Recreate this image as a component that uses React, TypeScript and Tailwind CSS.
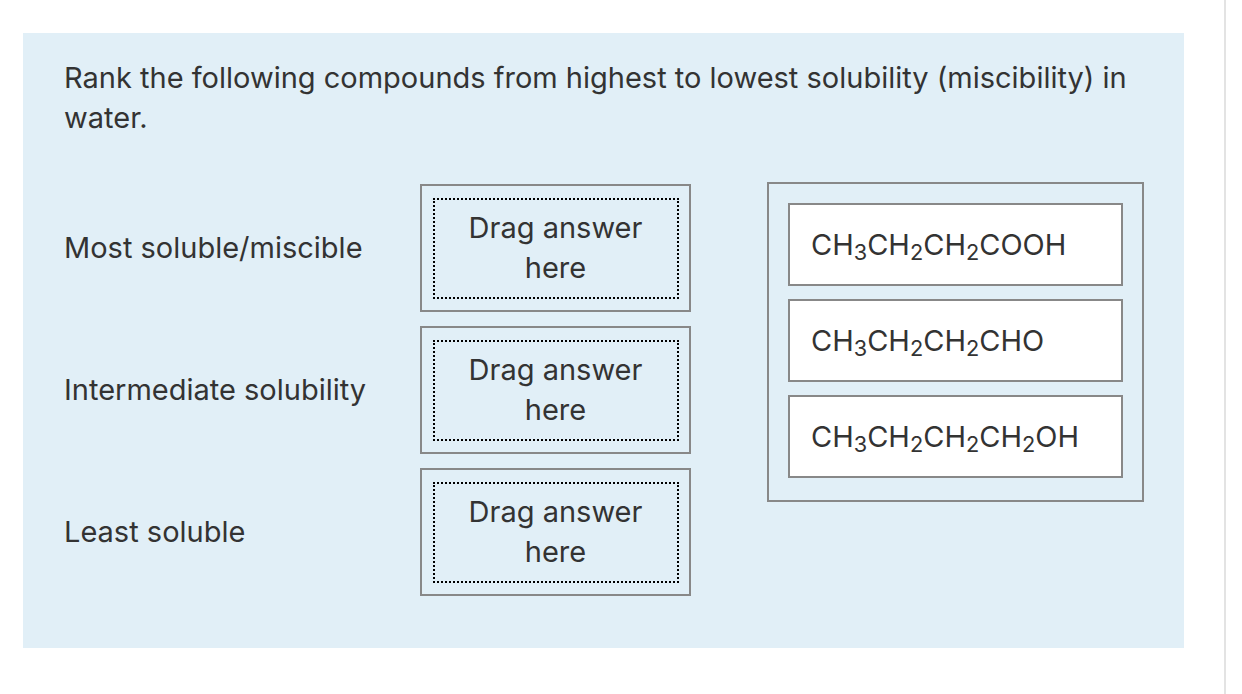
import React from "react";

const rows = ["Most soluble/miscible", "Intermediate solubility", "Least soluble"];

const Formula: React.FC<{ parts: [string, string?][] }> = ({ parts }) => (
  <span>
    {parts.map(([t, s], i) => (
      <React.Fragment key={i}>
        {t}
        {s && <sub>{s}</sub>}
      </React.Fragment>
    ))}
  </span>
);

const answers: [string, string?][][] = [
  [["CH", "3"], ["CH", "2"], ["CH", "2"], ["COOH"]],
  [["CH", "3"], ["CH", "2"], ["CH", "2"], ["CHO"]],
  [["CH", "3"], ["CH", "2"], ["CH", "2"], ["CH", "2"], ["OH"]],
];

const DropZone: React.FC = () => (
  <div className="w-[271px] h-[128px] shrink-0 border-2 border-[#888888] flex items-center justify-center">
    <div className="w-[246px] h-[101px] border-2 border-dotted border-black flex items-center justify-center text-center leading-[40px]">
      Drag answer
      <br />
      here
    </div>
  </div>
);

const App: React.FC = () => {
  return (
    <div
      className="min-h-[694px] bg-white text-[#333333] text-[29px]"
      style={{ fontFamily: "Inter, 'Liberation Sans', sans-serif" }}
    >
      <div className="w-[1226px] min-h-[694px] border-r-2 border-[#e3e3e3] pt-[33px] pl-[23px] pr-[40px]">
        <div className="bg-[#e1eff7] h-[615px] pl-[41px] pt-[25px] pr-[40px]">
          <p className="leading-[40px]">
            Rank the following compounds from highest to lowest solubility (miscibility) in water.
          </p>

          <div className="flex mt-[44px]">
            <div className="flex flex-col gap-[14px] pt-[2px] shrink-0">
              {rows.map((label) => (
                <div key={label} className="flex items-center">
                  <div className="w-[356px]">{label}</div>
                  <DropZone />
                </div>
              ))}
            </div>

            <div className="ml-[76px] w-[377px] h-[320px] shrink-0 border-2 border-[#888888] pt-[19px] px-[19px] flex flex-col gap-[13px]">
              {answers.map((a, i) => (
                <div
                  key={i}
                  className="h-[83px] bg-white border-2 border-[#888888] flex items-center pl-[21px]"
                >
                  <Formula parts={a} />
                </div>
              ))}
            </div>
          </div>
        </div>
      </div>
    </div>
  );
};

export default App;
